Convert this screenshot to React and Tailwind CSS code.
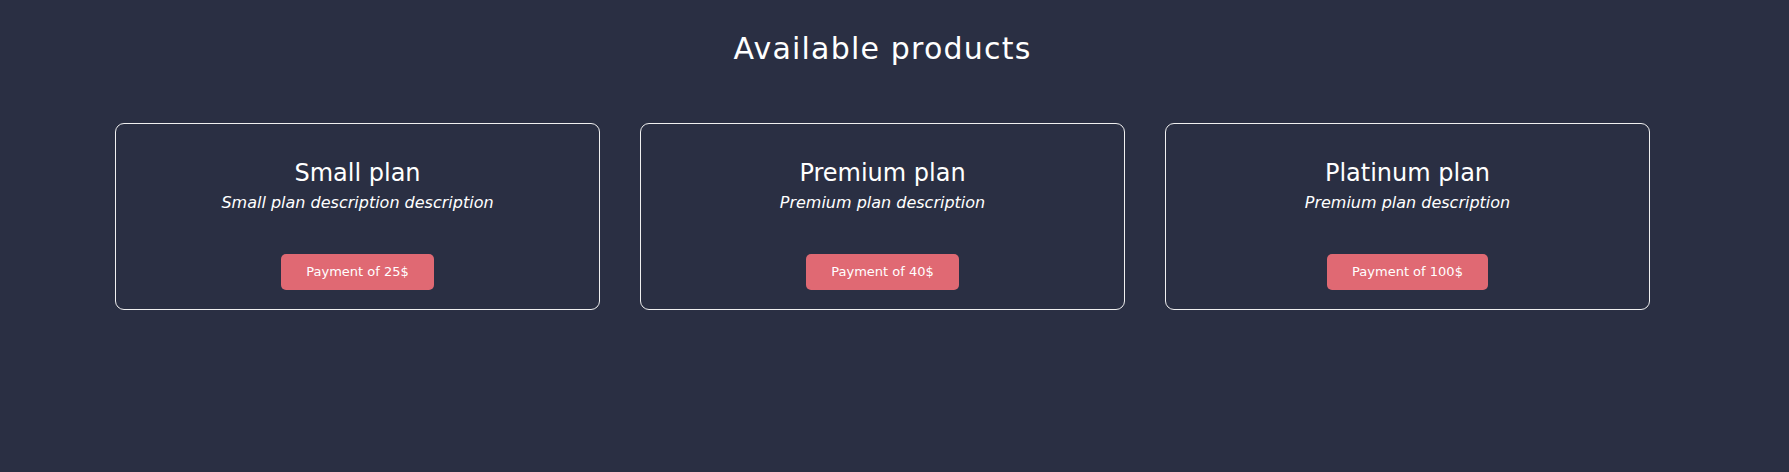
const products = [
  { name: 'Small plan', description: 'Small plan description description', price: 25 },
  { name: 'Premium plan', description: 'Premium plan description', price: 40 },
  { name: 'Platinum plan', description: 'Premium plan description', price: 100 },
];

export default function App() {
  return (
    <div className="min-h-[472px] w-full bg-[#2a2f43] text-white font-['DejaVu_Sans',sans-serif]">
      <div className="w-[1765px] flex flex-col items-center pt-[31px]">
        <h1 className="text-[30px] leading-[36px] tracking-[1.2px]">Available products</h1>

        <div className="mt-[56px] flex gap-[40px]">
          {products.map((product) => (
            <div
              key={product.name}
              className="w-[485px] h-[187px] border border-[#f0f0f0] rounded-[9px] flex flex-col items-center pt-[33px]"
            >
              <h3 className="text-[24px] leading-[32px]">{product.name}</h3>
              <p className="mt-[3px] text-[16px] leading-[22px] italic">{product.description}</p>
              <button className="mt-[40px] h-[36px] px-[25px] rounded-[5px] bg-[#e06973] text-[13px] text-white">
                Payment of {product.price}$
              </button>
            </div>
          ))}
        </div>
      </div>
    </div>
  );
}
